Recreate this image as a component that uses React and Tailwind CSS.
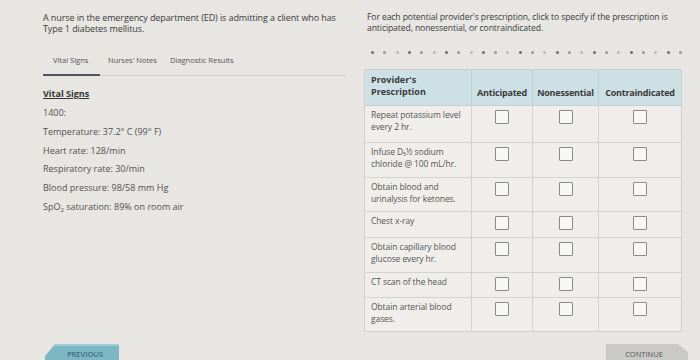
import React from 'react';

const vitals = [
  '1400:',
  'Temperature: 37.2° C (99° F)',
  'Heart rate: 128/min',
  'Respiratory rate: 30/min',
  'Blood pressure: 98/58 mm Hg',
];

const rows = [
  { text: ['Repeat potassium level', 'every 2 hr.'], h: 'h-[37px]' },
  { text: ['Infuse D₅½ sodium', 'chloride @ 100 mL/hr.'], h: 'h-[35px]' },
  { text: ['Obtain blood and', 'urinalysis for ketones.'], h: 'h-[34px]' },
  { text: ['Chest x-ray'], h: 'h-[26px]' },
  { text: ['Obtain capillary blood', 'glucose every hr.'], h: 'h-[35px]' },
  { text: ['CT scan of the head'], h: 'h-[25px]' },
  { text: ['Obtain arterial blood', 'gases.'], h: 'h-[33px]' },
];

const dots = Array.from({ length: 26 }, (_, i) => i);

const Box = () => (
  <div className="w-[14px] h-[14px] border border-[#8a8a8a] rounded-[1px] bg-[#f7f7f5]" />
);

export default function App() {
  return (
    <div className="w-[700px] h-[360px] overflow-hidden bg-[#e7e6e2] flex font-['Open_Sans',sans-serif] text-[#4a4a4a]">
      {/* left side */}
      <div className="w-[345px] pl-[43px] pt-[12px] flex flex-col">
        <p className="text-[9px] leading-[11px] text-[#3a3a3a] w-[300px] tracking-[-0.1px]">
          A nurse in the emergency department (ED) is admitting a client who has Type 1 diabetes mellitus.
        </p>
        <div className="mt-[21px] flex text-[7.5px] text-[#555] border-b border-[#cfcfcc]">
          <div className="w-[57px] pl-[10px] pb-[8px] border-b-2 border-[#4b5565] -mb-px">Vital Signs</div>
          <div className="w-[70px] pl-[8px] pb-[8px]">Nurses' Notes</div>
          <div className="pb-[8px]">Diagnostic Results</div>
        </div>
        <div className="mt-[12px] text-[9px] text-[#505050]">
          <div className="font-bold underline text-[#333] leading-[12px]">Vital Signs</div>
          {vitals.map((v) => (
            <div key={v} className="mt-[6.8px] leading-[12px]">{v}</div>
          ))}
          <div className="mt-[6.8px] leading-[12px]">
            SpO<sub className="text-[6px]">2</sub> saturation: 89% on room air
          </div>
        </div>
        <div className="mt-auto mb-[-4px] ml-[2px] w-[74px] h-[20px] bg-[#7db7c3] border-t-2 border-[#9fd0da] [clip-path:polygon(10px_0,100%_0,100%_100%,0_100%,0_60%)] flex items-center justify-center text-[7.5px] font-semibold text-[#3e6c7c] pl-[6px]">
          PREVIOUS
        </div>
      </div>

      {/* right side */}
      <div className="w-[340px] pl-[19px] pt-[12px] flex flex-col">
        <p className="pl-[3px] text-[8.6px] leading-[11px] text-[#3a3a3a] tracking-[-0.1px]">
          For each potential provider's prescription, click to specify if the prescription is anticipated, nonessential, or contraindicated.
        </p>
        <div className="mt-[17px] pl-[7px] flex justify-between w-[318px]">
          {dots.map((i) => (
            <span
              key={i}
              className={
                i % 3 === 0
                  ? 'w-[3px] h-[3px] rounded-full bg-[#6f6f6f]'
                  : i % 3 === 1
                  ? 'w-[3px] h-[3px] rounded-full bg-[#8f9a9e]'
                  : 'w-[3px] h-[3px] rounded-full bg-[#b3bec0]'
              }
            />
          ))}
        </div>
        <div className="mt-[15px] w-[318px] border border-[#cfcfcc] bg-[#efeeea]">
          <div className="flex h-[36px] bg-[#cde0e5] border-b border-[#c4cfd2] text-[9px] font-bold text-[#3a3a3a]">
            <div className="w-[107px] border-r border-[#bfcfd3] pl-[6px] pt-[4px] leading-[12px]">
              Provider's<br />Prescription
            </div>
            <div className="w-[61px] border-r border-[#bfcfd3] flex items-end justify-center pb-[6px] tracking-[-0.2px]">Anticipated</div>
            <div className="w-[66px] border-r border-[#bfcfd3] flex items-end justify-center pb-[6px] tracking-[-0.2px]">Nonessential</div>
            <div className="flex-1 flex items-end justify-center pb-[6px] tracking-[-0.2px]">Contraindicated</div>
          </div>
          {rows.map((r, i) => (
            <div
              key={i}
              className={`flex ${r.h} ${i < rows.length - 1 ? 'border-b border-[#d3d3d0]' : ''} text-[8.5px] text-[#555]`}
            >
              <div className="w-[107px] border-r border-[#d3d3d0] pl-[6px] pt-[3px] leading-[11.5px] tracking-[-0.1px]">
                {r.text.map((t) => (
                  <div key={t}>{t}</div>
                ))}
              </div>
              <div className="w-[61px] border-r border-[#d3d3d0] flex justify-center pt-[4px]"><Box /></div>
              <div className="w-[66px] border-r border-[#d3d3d0] flex justify-center pt-[4px]"><Box /></div>
              <div className="flex-1 flex justify-center pt-[4px]"><Box /></div>
            </div>
          ))}
        </div>
        <div className="mt-auto ml-[242px] w-[82px] h-[16px] bg-[#c9c9c6] [clip-path:polygon(0_0,calc(100%-10px)_0,100%_50%,100%_100%,0_100%)] flex items-end justify-center pb-[1px] text-[7.5px] leading-[10px] text-[#555] pr-[6px]">
          CONTINUE
        </div>
      </div>
    </div>
  );
}
